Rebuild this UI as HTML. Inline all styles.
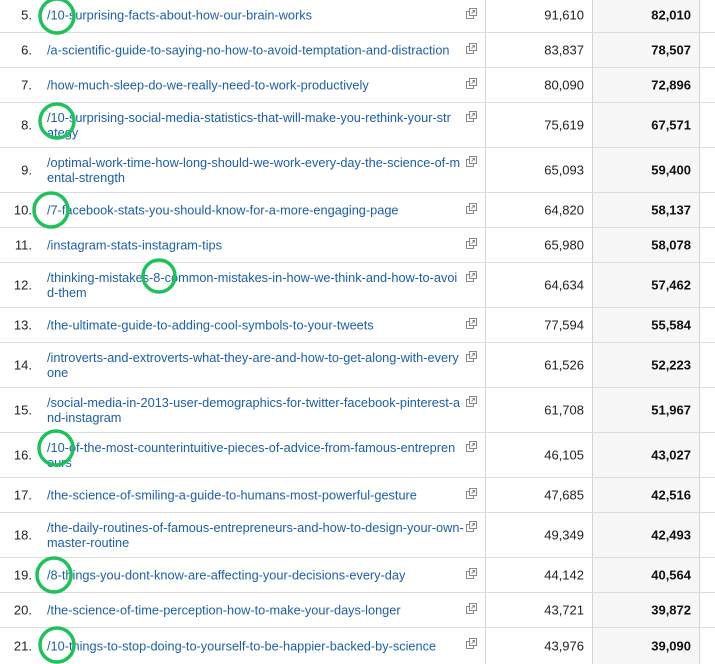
<!DOCTYPE html>
<html><head><meta charset="utf-8"><style>
body{margin:0;width:715px;height:664px;overflow:hidden;background:#fff;font-family:"Liberation Sans",Arial,sans-serif;font-size:13px;position:relative}
.bg{position:absolute;left:592px;width:107px;top:0;height:664px;background:#f7f7f7}
.v{position:absolute;top:0;height:664px;width:1px;background:#d4d4d4}
.r{position:absolute;left:0;width:715px;border-bottom:1px solid #dcdcdc;box-sizing:border-box}
.n{position:absolute;right:683px;color:#222;top:50%;transform:translateY(-50%)}
.t{position:absolute;left:47px;width:417px;color:#1c5fa8;line-height:15px;white-space:nowrap;overflow:hidden;top:50%;transform:translateY(-50%);font-size:12.75px}
.a{position:absolute;right:131px;color:#222;top:50%;transform:translateY(-50%)}
.b{position:absolute;right:24px;color:#111;font-weight:bold;top:50%;transform:translateY(-50%)}
svg.c{position:absolute;left:0;top:0}
</style></head><body>
<div class="bg"></div>
<div class="v" style="left:485px"></div><div class="v" style="left:592px"></div><div class="v" style="left:699px"></div>
<div class="r" style="top:-2px;height:35px"><span class="n">5.</span><span class="t">/10-surprising-facts-about-how-our-brain-works</span><span class="a">91,610</span><span class="b">82,010</span></div>
<div class="r" style="top:33px;height:35px"><span class="n">6.</span><span class="t">/a-scientific-guide-to-saying-no-how-to-avoid-temptation-and-distraction</span><span class="a">83,837</span><span class="b">78,507</span></div>
<div class="r" style="top:68px;height:35px"><span class="n">7.</span><span class="t">/how-much-sleep-do-we-really-need-to-work-productively</span><span class="a">80,090</span><span class="b">72,896</span></div>
<div class="r" style="top:103px;height:45px"><span class="n">8.</span><span class="t">/10-surprising-social-media-statistics-that-will-make-you-rethink-your-str<br>ategy</span><span class="a">75,619</span><span class="b">67,571</span></div>
<div class="r" style="top:148px;height:45px"><span class="n">9.</span><span class="t">/optimal-work-time-how-long-should-we-work-every-day-the-science-of-m<br>ental-strength</span><span class="a">65,093</span><span class="b">59,400</span></div>
<div class="r" style="top:193px;height:35px"><span class="n">10.</span><span class="t">/7-facebook-stats-you-should-know-for-a-more-engaging-page</span><span class="a">64,820</span><span class="b">58,137</span></div>
<div class="r" style="top:228px;height:35px"><span class="n">11.</span><span class="t">/instagram-stats-instagram-tips</span><span class="a">65,980</span><span class="b">58,078</span></div>
<div class="r" style="top:263px;height:45px"><span class="n">12.</span><span class="t">/thinking-mistakes-8-common-mistakes-in-how-we-think-and-how-to-avoi<br>d-them</span><span class="a">64,634</span><span class="b">57,462</span></div>
<div class="r" style="top:308px;height:35px"><span class="n">13.</span><span class="t">/the-ultimate-guide-to-adding-cool-symbols-to-your-tweets</span><span class="a">77,594</span><span class="b">55,584</span></div>
<div class="r" style="top:343px;height:45px"><span class="n">14.</span><span class="t">/introverts-and-extroverts-what-they-are-and-how-to-get-along-with-every<br>one</span><span class="a">61,526</span><span class="b">52,223</span></div>
<div class="r" style="top:388px;height:45px"><span class="n">15.</span><span class="t">/social-media-in-2013-user-demographics-for-twitter-facebook-pinterest-a<br>nd-instagram</span><span class="a">61,708</span><span class="b">51,967</span></div>
<div class="r" style="top:433px;height:45px"><span class="n">16.</span><span class="t">/10-of-the-most-counterintuitive-pieces-of-advice-from-famous-entrepren<br>eurs</span><span class="a">46,105</span><span class="b">43,027</span></div>
<div class="r" style="top:478px;height:35px"><span class="n">17.</span><span class="t">/the-science-of-smiling-a-guide-to-humans-most-powerful-gesture</span><span class="a">47,685</span><span class="b">42,516</span></div>
<div class="r" style="top:513px;height:45px"><span class="n">18.</span><span class="t">/the-daily-routines-of-famous-entrepreneurs-and-how-to-design-your-own-<br>master-routine</span><span class="a">49,349</span><span class="b">42,493</span></div>
<div class="r" style="top:558px;height:35px"><span class="n">19.</span><span class="t">/8-things-you-dont-know-are-affecting-your-decisions-every-day</span><span class="a">44,142</span><span class="b">40,564</span></div>
<div class="r" style="top:593px;height:35px"><span class="n">20.</span><span class="t">/the-science-of-time-perception-how-to-make-your-days-longer</span><span class="a">43,721</span><span class="b">39,872</span></div>
<div class="r" style="top:628px;height:36px;border:0"><span class="n">21.</span><span class="t">/10-things-to-stop-doing-to-yourself-to-be-happier-backed-by-science</span><span class="a">43,976</span><span class="b">39,090</span></div>
<svg class="c" width="715" height="664">
<defs><g id="ic" fill="none" stroke="#888" stroke-width="1"><rect x="0.5" y="3.5" width="7" height="7" fill="#fff"/><rect x="3.5" y="0.5" width="7" height="7" fill="#fff"/><path d="M5.5 5.5 L8.5 2.5 M6.5 2.5 H8.5 V4.5"/></g></defs>
<use href="#ic" x="466" y="8"/><use href="#ic" x="466" y="43"/><use href="#ic" x="466" y="78"/><use href="#ic" x="466" y="111"/><use href="#ic" x="466" y="156"/><use href="#ic" x="466" y="203"/><use href="#ic" x="466" y="238"/><use href="#ic" x="466" y="271"/><use href="#ic" x="466" y="318"/><use href="#ic" x="466" y="351"/><use href="#ic" x="466" y="396"/><use href="#ic" x="466" y="441"/><use href="#ic" x="466" y="488"/><use href="#ic" x="466" y="521"/><use href="#ic" x="466" y="568"/><use href="#ic" x="466" y="603"/><use href="#ic" x="466" y="638"/>
<g fill="none" stroke="#1dc25a" stroke-width="3.5">
<circle cx="57" cy="16" r="17"/><circle cx="57" cy="121" r="17"/><circle cx="51" cy="210" r="17"/><circle cx="159" cy="276" r="16"/><circle cx="56" cy="448" r="17"/><circle cx="54" cy="575" r="17"/><circle cx="57" cy="645" r="17"/>
</g></svg>
</body></html>
